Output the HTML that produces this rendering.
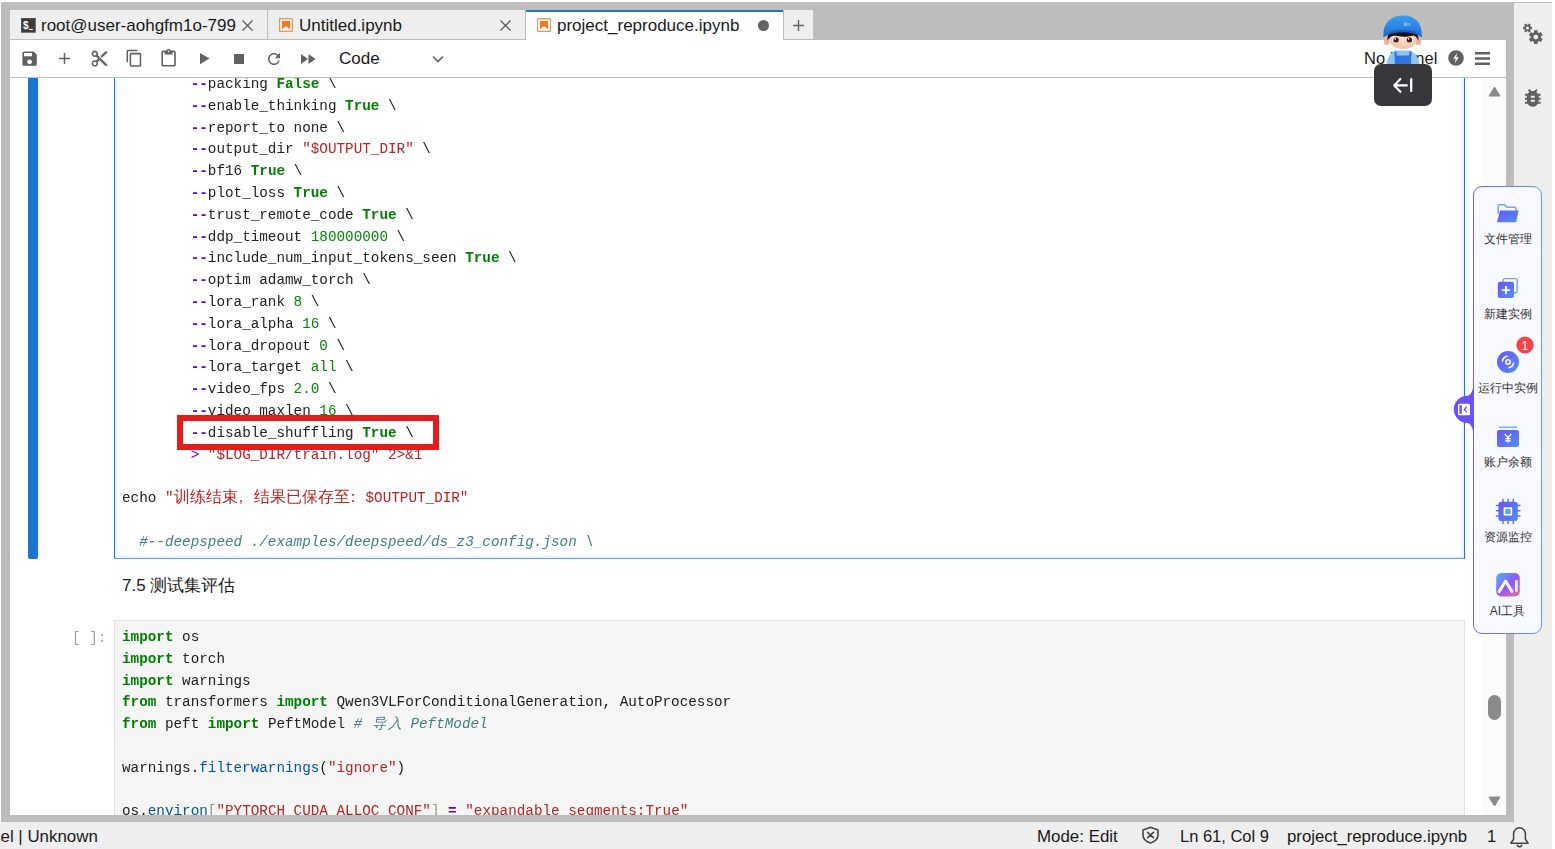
<!DOCTYPE html>
<html><head><meta charset="utf-8">
<style>
*{margin:0;padding:0;box-sizing:border-box}
html,body{width:1555px;height:849px;overflow:hidden;background:#fff;font-family:"Liberation Sans",sans-serif;color:rgba(0,0,0,0.87)}
.a{position:absolute}
#frame{left:1px;top:2px;width:1513px;height:820px;background:#bdbdbd}
.tab{position:absolute;top:10px;height:30px;background:#eeeeee;border-bottom:1px solid #bdbdbd}
.tabtxt{position:absolute;top:0;font-size:17px;line-height:30px;white-space:pre;color:#1a1a1a}
#panel{left:10px;top:40px;width:1496px;height:775px;background:#fff;overflow:hidden}
#toolbar{left:0;top:0;width:1496px;height:38px;border-bottom:1px solid #bdbdbd;background:#fff}
#sidebar{left:1514px;top:2px;width:38px;height:820px;background:#eeeeee;border-top:1px solid #bdbdbd}
#status{left:0;top:822px;width:1552px;height:27px;background:#eeeeee}
.st{position:absolute;top:1px;font-size:16.5px;line-height:27px;white-space:pre;color:#1a1a1a}
.code{font-family:"Liberation Mono",monospace;font-size:14.3px;color:#212121;will-change:transform}
.ln{height:21.8px;line-height:21.8px;white-space:pre}
.op{color:#6c00c6;font-weight:bold}
.dd{position:relative;top:0px}
.kw{color:#008000;font-weight:bold}
.num{color:#008800}
.str{color:#ba2121}
.cm{color:#408080;font-style:italic}
.bi{color:#0055aa}
.br{color:#999977}
.cjk{font-size:16px}
.fwp{display:inline-block;width:16px;text-indent:-5px;overflow:visible}
.cjk2{font-size:14px;letter-spacing:2px;position:relative;left:1px;margin-right:-1px}
.plab{left:1473px;width:69px;text-align:center;font-size:12px;line-height:18px;color:#333;white-space:nowrap}
</style></head><body>
<div id="frame" class="a"></div>

<!-- tabs -->
<div class="tab" style="left:10px;width:257px"></div>
<div class="a" style="left:267px;top:10px;width:1px;height:30px;background:#bdbdbd"></div>
<div class="tab" style="left:268px;width:258px"></div>
<div class="a" style="left:525px;top:10px;width:1px;height:30px;background:#bdbdbd"></div>
<div class="a" style="left:526px;top:10px;width:257px;height:30px;background:#fff;border-top:2px solid #1976d2"></div>
<div class="tab" style="left:783px;width:30px;border-left:1px solid #bdbdbd"></div>

<!-- terminal icon -->
<svg class="a" style="left:21px;top:18px" width="15" height="15" viewBox="0 0 15 15"><rect x="0.1" y="0.1" width="14.4" height="14.3" fill="#3d3d3d" stroke="#5a5a5a" stroke-width="0.6"/><text x="2" y="10.6" font-family="Liberation Sans" font-weight="bold" font-size="10" fill="#fff">$</text><rect x="7.8" y="10.9" width="4.2" height="1" fill="#fff"/></svg>
<div class="tabtxt" style="left:41px;top:11px">root@user-aohgfm1o-799</div>
<svg class="a" style="left:241px;top:19px" width="13" height="13" viewBox="0 0 13 13"><path d="M1.5 1.5L11.5 11.5M11.5 1.5L1.5 11.5" stroke="#616161" stroke-width="1.4"/></svg>

<!-- notebook icon -->
<svg class="a" style="left:279.2px;top:18.2px" width="14" height="14" viewBox="0 0 14 14"><rect x="0.6" y="0.6" width="12.8" height="12.8" rx="0.5" fill="none" stroke="#f39255" stroke-width="1.2"/><path d="M3 3.1H11V11.2L7 7.9L3 11.2Z" fill="#f37726"/></svg>
<div class="tabtxt" style="left:299px;top:11px">Untitled.ipynb</div>
<svg class="a" style="left:499px;top:19px" width="13" height="13" viewBox="0 0 13 13"><path d="M1.5 1.5L11.5 11.5M11.5 1.5L1.5 11.5" stroke="#616161" stroke-width="1.4"/></svg>

<svg class="a" style="left:537.2px;top:18.2px" width="14" height="14" viewBox="0 0 14 14"><rect x="0.6" y="0.6" width="12.8" height="12.8" rx="0.5" fill="none" stroke="#f39255" stroke-width="1.2"/><path d="M3 3.1H11V11.2L7 7.9L3 11.2Z" fill="#f37726"/></svg>
<div class="tabtxt" style="left:557px;top:11px">project_reproduce.ipynb</div>
<div class="a" style="left:758px;top:20px;width:11px;height:11px;border-radius:50%;background:#616161"></div>
<svg class="a" style="left:792px;top:19px" width="13" height="13" viewBox="0 0 13 13"><path d="M6.5 1V12M1 6.5H12" stroke="#616161" stroke-width="1.4"/></svg>

<div id="panel" class="a">
  <div id="toolbar" class="a">
  <!-- save -->
  <svg class="a" style="left:9.7px;top:8.8px" width="19.2" height="19.2" viewBox="0 0 24 24"><path fill="#616161" d="M17 3H5c-1.11 0-2 .9-2 2v14c0 1.1.89 2 2 2h14c1.1 0 2-.9 2-2V7l-4-4zm-5 16c-1.66 0-3-1.34-3-3s1.34-3 3-3 3 1.34 3 3-1.34 3-3 3zm3-10H5V5h10v4z"/></svg>
  <!-- add -->
  <svg class="a" style="left:48px;top:12px" width="13" height="13" viewBox="0 0 13 13"><path d="M6.5 1V12M1 6.5H12" stroke="#616161" stroke-width="1.5"/></svg>
  <!-- cut -->
  <svg class="a" style="left:80px;top:8.8px" width="19.2" height="19.2" viewBox="0 0 24 24"><path fill="#616161" d="M9.64 7.64c.23-.5.36-1.05.36-1.64 0-2.21-1.79-4-4-4S2 3.79 2 6s1.79 4 4 4c.59 0 1.14-.13 1.64-.36L10 12l-2.36 2.36C7.14 14.13 6.59 14 6 14c-2.21 0-4 1.790-4 4s1.79 4 4 4 4-1.79 4-4c0-.59-.13-1.14-.36-1.64L12 14l7 7h3v-1L9.640 7.64zM6 8c-1.1 0-2-.89-2-2s.9-2 2-2 2 .89 2 2-.9 2-2 2zm0 12c-1.1 0-2-.89-2-2s.9-2 2-2 2 .89 2 2-.9 2-2 2zm6-7.5c-.28 0-.5-.22-.5-.5s.22-.5.5-.5.5.22.5.5-.22.5-.5.5zM19 3l-6 6 2 2 7-7V3z"/></svg>
  <!-- copy -->
  <svg class="a" style="left:115.25px;top:9.3px" width="18.55" height="18.55" viewBox="0 0 24 24"><path fill="#616161" d="M16 1H4c-1.1 0-2 .9-2 2v14h2V3h12V1zm3 4H8c-1.1 0-2 .9-2 2v14c0 1.1.9 2 2 2h11c1.1 0 2-.9 2-2V7c0-1.1-.9-2-2-2zm0 16H8V7h11v14z"/></svg>
  <!-- paste -->
  <svg class="a" style="left:149px;top:8.8px" width="19.2" height="19.2" viewBox="0 0 24 24"><path fill="#616161" d="M19 2h-4.18C14.4.84 13.3 0 12 0c-1.3 0-2.4.84-2.82 2H5c-1.1 0-2 .9-2 2v16c0 1.1.9 2 2 2h14c1.1 0 2-.9 2-2V4c0-1.1-.9-2-2-2zm-7 0c.55 0 1 .45 1 1s-.45 1-1 1-1-.45-1-1 .45-1 1-1zm7 18H5V4h2v3h10V4h2v16z"/></svg>
  <!-- run -->
  <svg class="a" style="left:190px;top:13px" width="10" height="12" viewBox="0 0 10 12"><path fill="#616161" d="M0 0L9.5 5.6L0 11.3Z"/></svg>
  <!-- stop -->
  <div class="a" style="left:224px;top:14px;width:10px;height:10px;background:#616161"></div>
  <!-- restart -->
  <svg class="a" style="left:255px;top:10px" width="18" height="18" viewBox="0 0 24 24"><path fill="#616161" d="M17.65 6.35C16.2 4.9 14.21 4 12 4c-4.42 0-7.99 3.58-7.99 8s3.57 8 7.99 8c3.73 0 6.84-2.55 7.730-6h-2.08c-.82 2.33-3.04 4-5.65 4-3.310 0-6-2.69-6-6s2.69-6 6-6c1.66 0 3.14.69 4.22 1.78L13 11h7V4l-2.35 2.35z"/></svg>
  <!-- ff -->
  <svg class="a" style="left:291px;top:13.5px" width="15" height="10" viewBox="0 0 15 10"><path fill="#616161" d="M0 0L7 5L0 10ZM7.5 0L14.5 5L7.5 10Z"/></svg>
  <div class="a" style="left:329px;top:0;font-size:17px;line-height:37px;color:#1a1a1a">Code</div>
  <svg class="a" style="left:422px;top:15px" width="12" height="8" viewBox="0 0 12 8"><path d="M1 1.5L6 6.5L11 1.5" fill="none" stroke="#616161" stroke-width="1.6"/></svg>
  <div class="a" style="left:1354px;top:0;font-size:16.5px;line-height:37px;color:#1a1a1a">No Kernel</div>
  <svg class="a" style="left:1438px;top:9.5px" width="16" height="16" viewBox="0 0 16 16"><circle cx="8" cy="8" r="7.8" fill="#616161"/><path d="M9.2 2.8L5.2 8.8H7.8L6.8 13.2L10.8 7.2H8.2Z" fill="#fff"/></svg>
  <svg class="a" style="left:1465px;top:12px" width="15" height="13" viewBox="0 0 15 13"><path d="M0 1.3H15M0 6.5H15M0 11.7H15" stroke="#616161" stroke-width="2.6"/></svg>
</div>
  <div id="content" class="a" style="left:0;top:38px;width:1496px;height:737px;overflow:hidden">
  <!-- coordinates: page = (x+10, y+78) -->
  <div class="a" style="left:18px;top:-10px;width:10px;height:491px;background:#1976d2;border-radius:0 0 2px 2px"></div>
  <div class="a" style="left:104px;top:-100px;width:1351px;height:581px;border:1px solid #1976d2;border-bottom-color:#62a0e2;box-shadow:inset 0 0 4px rgba(90,170,245,0.4);background:#fff"></div>
  <div class="a code" style="left:112.4px;top:-3.91px">
<div class="ln">        <span class="op dd">--</span>packing <span class="kw">False</span> \</div>
<div class="ln">        <span class="op dd">--</span>enable_thinking <span class="kw">True</span> \</div>
<div class="ln">        <span class="op dd">--</span>report_to none \</div>
<div class="ln">        <span class="op dd">--</span>output_dir <span class="str">"$OUTPUT_DIR"</span> \</div>
<div class="ln">        <span class="op dd">--</span>bf16 <span class="kw">True</span> \</div>
<div class="ln">        <span class="op dd">--</span>plot_loss <span class="kw">True</span> \</div>
<div class="ln">        <span class="op dd">--</span>trust_remote_code <span class="kw">True</span> \</div>
<div class="ln">        <span class="op dd">--</span>ddp_timeout <span class="num">180000000</span> \</div>
<div class="ln">        <span class="op dd">--</span>include_num_input_tokens_seen <span class="kw">True</span> \</div>
<div class="ln">        <span class="op dd">--</span>optim adamw_torch \</div>
<div class="ln">        <span class="op dd">--</span>lora_rank <span class="num">8</span> \</div>
<div class="ln">        <span class="op dd">--</span>lora_alpha <span class="num">16</span> \</div>
<div class="ln">        <span class="op dd">--</span>lora_dropout <span class="num">0</span> \</div>
<div class="ln">        <span class="op dd">--</span>lora_target <span class="num">all</span> \</div>
<div class="ln">        <span class="op dd">--</span>video_fps <span class="num">2.0</span> \</div>
<div class="ln">        <span class="op dd">--</span>video_maxlen <span class="num">16</span> \</div>
<div class="ln">        <span class="op dd">--</span>disable_shuffling <span class="kw">True</span> \</div>
<div class="ln">        <span class="op" style="font-weight:normal">&gt;</span> <span class="str">"$LOG_DIR/train.log" 2&gt;&amp;1</span></div>
<div class="ln"></div>
<div class="ln">echo <span class="str">"<span class="cjk">训练结束<span class="fwp">，</span>结果已保存至<span class="fwp">：</span></span>$OUTPUT_DIR"</span></div>
<div class="ln"></div>
<div class="ln">  <span class="cm">#--deepspeed ./examples/deepspeed/ds_z3_config.json \</span></div>
  </div>
  <div class="a" style="left:112px;top:498px;font-size:17px;line-height:20px;white-space:pre;color:#1a1a1a">7.5 测试集评估</div>
  <div class="a code" style="left:62px;top:550.2px;color:#a0a0a0;line-height:21.8px">[ ]:</div>
  <div class="a" style="left:104px;top:542px;width:1351px;height:400px;border:1px solid #e0e0e0;background:#f5f5f5"></div>
  <div class="a code" style="left:112.4px;top:549.39px">
<div class="ln"><span class="kw">import</span> os</div>
<div class="ln"><span class="kw">import</span> torch</div>
<div class="ln"><span class="kw">import</span> warnings</div>
<div class="ln"><span class="kw">from</span> transformers <span class="kw">import</span> Qwen3VLForConditionalGeneration, AutoProcessor</div>
<div class="ln"><span class="kw">from</span> peft <span class="kw">import</span> PeftModel <span class="cm"># <span class="cjk2">导入</span> PeftModel</span></div>
<div class="ln"></div>
<div class="ln">warnings.<span class="bi">filterwarnings</span>(<span class="str">"ignore"</span>)</div>
<div class="ln"></div>
<div class="ln">os.<span class="bi">environ</span><span class="br">[</span><span class="str">"PYTORCH_CUDA_ALLOC_CONF"</span><span class="br">]</span> <span class="op">=</span> <span class="str">"expandable_segments:True"</span></div>
  </div>
  <!-- scrollbar -->
  <div class="a" style="left:1473px;top:0;width:23px;height:737px;background:#fbfbfb"></div>
  <svg class="a" style="left:1478px;top:8px" width="13" height="11" viewBox="0 0 13 11"><path d="M6.5 1L12 10H1Z" fill="#8a8a8a" stroke="#8a8a8a" stroke-width="1" stroke-linejoin="round"/></svg>
  <div class="a" style="left:1478px;top:617px;width:13px;height:25px;border-radius:6.5px;background:#8a8a8a"></div>
  <svg class="a" style="left:1478px;top:718px" width="13" height="11" viewBox="0 0 13 11"><path d="M1 1H12L6.5 10Z" fill="#8a8a8a" stroke="#8a8a8a" stroke-width="1" stroke-linejoin="round"/></svg>
</div>
</div>

<div id="sidebar" class="a">
  <svg class="a" style="left:0;top:-3px" width="38" height="60" viewBox="1514 0 38 60"><g fill="#616161"><circle cx="1527.5" cy="27.9" r="3.2"/><rect x="1526.3" y="23.4" width="2.4" height="4.5" transform="rotate(30 1527.5 27.9)"/><rect x="1526.3" y="23.4" width="2.4" height="4.5" transform="rotate(90 1527.5 27.9)"/><rect x="1526.3" y="23.4" width="2.4" height="4.5" transform="rotate(150 1527.5 27.9)"/><rect x="1526.3" y="23.4" width="2.4" height="4.5" transform="rotate(210 1527.5 27.9)"/><rect x="1526.3" y="23.4" width="2.4" height="4.5" transform="rotate(270 1527.5 27.9)"/><rect x="1526.3" y="23.4" width="2.4" height="4.5" transform="rotate(330 1527.5 27.9)"/></g><circle cx="1527.5" cy="27.9" r="1.5" fill="#eeeeee"/><g fill="#616161"><circle cx="1535.8" cy="37.1" r="5.2"/><rect x="1534.0" y="30.200000000000003" width="3.6" height="6.9" transform="rotate(0 1535.8 37.1)"/><rect x="1534.0" y="30.200000000000003" width="3.6" height="6.9" transform="rotate(60 1535.8 37.1)"/><rect x="1534.0" y="30.200000000000003" width="3.6" height="6.9" transform="rotate(120 1535.8 37.1)"/><rect x="1534.0" y="30.200000000000003" width="3.6" height="6.9" transform="rotate(180 1535.8 37.1)"/><rect x="1534.0" y="30.200000000000003" width="3.6" height="6.9" transform="rotate(240 1535.8 37.1)"/><rect x="1534.0" y="30.200000000000003" width="3.6" height="6.9" transform="rotate(300 1535.8 37.1)"/></g><circle cx="1535.8" cy="37.1" r="2.4" fill="#eeeeee"/></svg>
  <svg class="a" style="left:7.2px;top:83px" width="23.6" height="23.6" viewBox="0 0 24 24"><path fill="#616161" d="M20 8h-2.81c-.45-.78-1.07-1.45-1.82-1.96L17 4.41 15.59 3l-2.17 2.17C12.96 5.06 12.49 5 12 5c-.49 0-.96.06-1.41.17L8.410 3 7 4.41l1.62 1.63C7.880 6.55 7.26 7.22 6.81 8H4v2h2.09c-.05.33-.09.66-.09 1v1H4v2h2v1c0 .34.04.67.09 1H4v2h2.81c1.04 1.79 2.97 3 5.19 3s4.15-1.21 5.19-3H20v-2h-2.09c.05-.33.09-.66.09-1v-1h2v-2h-2v-1c0-.34-.04-.67-.09-1H20V8zm-6 8h-4v-2h4v2zm0-4h-4v-2h4v2z"/></svg>
</div>
<div id="status" class="a">
  <div class="st" style="left:0.5px;font-size:16.9px">el | Unknown</div>
  <div class="st" style="left:1037px;font-size:16.9px">Mode: Edit</div>
  <svg class="a" style="left:1141px;top:4px" width="19" height="19" viewBox="0 0 19 19"><path d="M9.5 1.3L17 3.9V8.8C17 12.6 14 15.8 9.5 17C5 15.8 2 12.6 2 8.8V3.9Z" fill="none" stroke="#444" stroke-width="1.6" stroke-linejoin="round"/><path d="M6.6 6.4L12.4 11.7M12.4 6.4L6.6 11.7" stroke="#444" stroke-width="1.6" stroke-linecap="round"/></svg>
  <div class="st" style="left:1180px">Ln 61, Col 9</div>
  <div class="st" style="left:1287px;font-size:16.8px">project_reproduce.ipynb</div>
  <div class="st" style="left:1487px">1</div>
  <svg class="a" style="left:1508px;top:4px" width="23" height="22" viewBox="0 0 23 22"><path d="M11.5 1.8C7.8 1.8 5.6 4.6 5.6 8.2V13.3L2.8 17.2H20.2L17.4 13.3V8.2C17.4 4.6 15.2 1.8 11.5 1.8Z" fill="none" stroke="#444" stroke-width="1.5" stroke-linejoin="round"/><path d="M9.3 18.6a2.2 2.2 0 0 0 4.4 0" fill="none" stroke="#444" stroke-width="1.5"/></svg>
</div>

<!-- floating panel -->
<svg class="a" style="left:1450px;top:180px" width="100" height="460" viewBox="1450 180 100 460">
  <defs>
    <linearGradient id="pb" x1="0" y1="0" x2="1" y2="0"><stop offset="0" stop-color="#7b5cf5"/><stop offset="1" stop-color="#5aa0f8"/></linearGradient>
    <linearGradient id="ig" x1="0" y1="0" x2="1" y2="1"><stop offset="0" stop-color="#6a55f2"/><stop offset="1" stop-color="#4f8ef7"/></linearGradient>
    <linearGradient id="ai" x1="0" y1="0" x2="1" y2="1"><stop offset="0" stop-color="#4fb6f5"/><stop offset="0.5" stop-color="#8b5cf6"/><stop offset="1" stop-color="#f06aa0"/></linearGradient>
  </defs>
  <rect x="1473.5" y="186.5" width="68" height="447" rx="8.5" fill="#f7f9fe" stroke="url(#pb)" stroke-width="1"/>
  <!-- handle -->
  <path d="M1474 378.5 C1474 390.5 1470.5 395.7 1467.4 395.7 A13.6 13.6 0 0 0 1467.4 422.9 C1470.5 422.9 1474 428 1474 440 Z" fill="#6b50f4"/>
  <rect x="1458" y="403.7" width="12" height="11.6" rx="1.6" fill="#fff"/>
  <rect x="1459.4" y="405.2" width="2.4" height="8.6" fill="#6b50f4"/>
  <path d="M1466.8 406.6L1464.2 409.5L1466.8 412.4" fill="none" stroke="#6b50f4" stroke-width="1.2"/>
  <!-- folder -->
  <path d="M1498.2 214V206Q1498.2 204.8 1499.4 204.8H1504.6L1507 207.3H1514.8Q1516 207.3 1516 208.5V211" fill="none" stroke="#6aa8fb" stroke-width="1.5"/>
  <path d="M1500 210.5H1518.6L1516.2 222.2H1497Z" fill="url(#ig)"/>
  <!-- new instance -->
  <rect x="1503" y="278.6" width="14.2" height="14.2" rx="2" fill="none" stroke="#6aa8fb" stroke-width="1.4"/>
  <rect x="1497.8" y="281.8" width="16.2" height="16.2" rx="2.5" fill="url(#ig)"/>
  <path d="M1505.9 286v8.2M1501.8 290.1h8.2" stroke="#fff" stroke-width="1.9"/>
  <!-- running -->
  <circle cx="1508" cy="362" r="11" fill="url(#ig)"/>
  <circle cx="1508" cy="362" r="2.2" fill="none" stroke="#fff" stroke-width="1.5"/>
  <path d="M1502.5 361 A5.8 5.8 0 0 1 1507 356.3" fill="none" stroke="#fff" stroke-width="1.5" stroke-linecap="round"/>
  <path d="M1513.5 363 A5.8 5.8 0 0 1 1509 367.7" fill="none" stroke="#fff" stroke-width="1.5" stroke-linecap="round"/>
  <circle cx="1525" cy="345" r="8.6" fill="#f04545"/>
  <text x="1525" y="350" font-family="Liberation Sans" font-size="12.5" fill="#fff" text-anchor="middle">1</text>
  <!-- account -->
  <rect x="1499" y="426.5" width="18" height="1.6" fill="#7fb2fb"/>
  <rect x="1497" y="430" width="22" height="17" rx="2" fill="url(#ig)"/>
  <path d="M1504.8 434l3.2 3.6 3.2-3.6M1508 437.6v5M1505.2 438.6h5.6M1505.2 440.8h5.6" fill="none" stroke="#fff" stroke-width="1.3"/>
  <!-- chip -->
  <path d="M1503 498.8v3.5M1508.1 498.8v3.5M1513.3 498.8v3.5M1503 520.5v3.5M1508.1 520.5v3.5M1513.3 520.5v3.5M1495.8 505.6h3.5M1495.8 510.8h3.5M1495.8 516h3.5M1517 505.6h3.5M1517 510.8h3.5M1517 516h3.5" stroke="#6a6cf4" stroke-width="1.5"/>
  <rect x="1498.4" y="501.7" width="19.4" height="19.4" rx="3.2" fill="url(#ig)"/>
  <rect x="1503.6" y="507.2" width="8.6" height="8.4" rx="1" fill="#fff"/>
  <rect x="1505.2" y="508.8" width="5.4" height="5.2" fill="#5aa6f8"/>
  <!-- AI -->
  <rect x="1496.2" y="573" width="23.6" height="23.4" rx="5" fill="url(#ai)"/>
  <path d="M1499.2 591.6L1505.6 581L1512 591.6" fill="none" stroke="#f4f0ff" stroke-width="3" stroke-linejoin="round" stroke-linecap="round"/>
  <path d="M1499.2 591.6L1501.5 587.8" stroke="#fde9b8" stroke-width="3" stroke-linecap="round"/>
  <rect x="1515" y="580" width="2.8" height="11.8" rx="1" fill="#cdf3ff"/>
</svg>
<div class="a plab" style="top:230px">文件管理</div>
<div class="a plab" style="top:305px">新建实例</div>
<div class="a plab" style="top:379px">运行中实例</div>
<div class="a plab" style="top:453px">账户余额</div>
<div class="a plab" style="top:528px">资源监控</div>
<div class="a plab" style="top:602px">AI工具</div>

<!-- avatar -->
<svg class="a" style="left:1378px;top:12px" width="50" height="56" viewBox="0 0 50 56">
  <defs>
    <linearGradient id="hel" x1="0" y1="0" x2="0" y2="1"><stop offset="0" stop-color="#3b9cf2"/><stop offset="1" stop-color="#1f72da"/></linearGradient>
    <radialGradient id="skin" cx="0.5" cy="0.45" r="0.6"><stop offset="0" stop-color="#fbe0d0"/><stop offset="1" stop-color="#f0c0a6"/></radialGradient>
  </defs>
  <path d="M8.5 52 C9 45 13 40.5 18 38.5 H32 C37 40.5 41 45 41.5 52Z" fill="#8fc4f6"/>
  <path d="M16.8 43.5 H33 V52 H16.8Z" fill="#3173e0"/>
  <path d="M17.5 39.5 V45M32.3 39.5 V45" stroke="#3173e0" stroke-width="2.2"/>
  <ellipse cx="8.7" cy="29.4" rx="2.9" ry="3.7" fill="#eeb496"/>
  <ellipse cx="40.4" cy="29.4" rx="2.9" ry="3.7" fill="#eeb496"/>
  <path d="M11.2 26 C11.2 19 17 17 25 17 C33 17 38.9 19 38.9 26 C38.9 33 33 37 25 37 C17 37 11.2 33 11.2 26Z" fill="url(#skin)"/>
  <path d="M9.5 29 C9 21 13 17.5 25 17.5 C37 17.5 41 21 40.5 29 C39.5 26 38 24.5 35.5 23.5 C31 24.8 27 25 23 24.5 C19 24 16.5 23.5 14.5 24 C12 25 10.5 26.5 9.5 29Z" fill="#1a1418"/>
  <ellipse cx="17.8" cy="27.8" rx="3.3" ry="3.4" fill="#fff"/>
  <ellipse cx="31.7" cy="27.8" rx="3.3" ry="3.4" fill="#fff"/>
  <circle cx="18.1" cy="27.9" r="2.7" fill="#4a1c12"/>
  <circle cx="31.4" cy="27.9" r="2.7" fill="#4a1c12"/>
  <circle cx="17.3" cy="26.9" r="0.8" fill="#fff"/>
  <circle cx="30.6" cy="26.9" r="0.8" fill="#fff"/>
  <path d="M5.3 23.5 C5.3 11 13 3.6 25 3.6 C37 3.6 43.9 11 43.9 23.5 C38 19.5 32 18.2 25 18.2 C18 18.2 11 19.5 5.3 23.5Z" fill="url(#hel)"/>
  <path d="M5 23.8 C11 19.2 18 17.8 25 17.8 C32 17.8 38.5 19.2 44.2 23.8 L43.6 25 C38 21.5 32 20.2 25 20.2 C18 20.2 11.5 21.5 5.6 25Z" fill="#1c5ec4"/>
  <rect x="26" y="10.5" width="3.5" height="3.5" fill="#8ec8fa" opacity="0.8"/>
  <rect x="30.5" y="11" width="2" height="3" fill="#8ec8fa" opacity="0.6"/>
</svg>
<!-- tooltip -->
<div class="a" style="left:1374px;top:64px;width:58px;height:42px;border-radius:7px;background:#38373c"></div>
<svg class="a" style="left:1391px;top:76px" width="24" height="18" viewBox="0 0 24 18"><path d="M9.4 3L3.2 9.4L9.4 15.8M3.2 9.4H15.8" fill="none" stroke="#fff" stroke-width="2.2" stroke-linecap="round" stroke-linejoin="round"/><path d="M20.2 3.2V15" stroke="#fff" stroke-width="2.3" stroke-linecap="round"/></svg>
<div class="a" style="left:177px;top:415px;width:262px;height:35px;border:6px solid #e31c1c"></div>
</body></html>
